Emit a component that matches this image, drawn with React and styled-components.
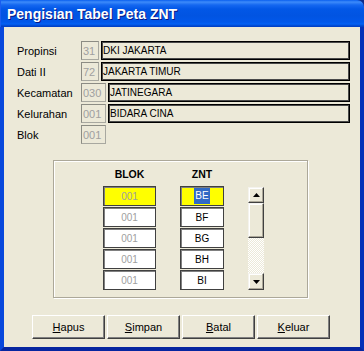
import React from 'react';
import styled, { createGlobalStyle } from 'styled-components';

const Global = createGlobalStyle`
  html, body { margin: 0; padding: 0; background: #0b2a8a; }
  body { font-family: "Liberation Sans", Arial, sans-serif; }
  * { box-sizing: border-box; }
`;

const Window = styled.div`
  width: 364px;
  height: 351px;
  display: flex;
  flex-direction: column;
  border-top-right-radius: 7px;
  overflow: hidden;
`;

const TitleBar = styled.div`
  height: 27px;
  flex: none;
  display: flex;
  align-items: center;
  padding: 1px 0 0 6px;
  background: linear-gradient(180deg, #0a5fef 0px, #3d8bfa 2px, #1467f0 5px, #0257e6 9px, #0154e2 16px, #0157ea 22px, #0361f4 24px, #0045cc 26px, #003dc4 27px);
  border-left: 1px solid #1a5ef0;
  color: #fff;
  font: bold 14px "Liberation Sans", Arial, sans-serif;
  text-shadow: 1px 1px 0 #0a1883;
`;

const Body = styled.div`
  flex: 1;
  display: flex;
  flex-direction: column;
  align-items: flex-start;
  background: #ece9d8;
  border-left: 4px solid #0848dc;
  border-right: 4px solid #0530b8;
  border-bottom: 4px solid #0726a0;
  padding: 14px 10px 8px 13px;
  font-size: 11px;
  color: #000;
`;

const Fields = styled.div`
  display: flex;
  flex-direction: column;
  gap: 2px;
  align-self: stretch;
`;

const Row = styled.div`
  display: flex;
  height: 19px;
  align-items: stretch;
`;

const Label = styled.div`
  width: 64px;
  display: flex;
  align-items: center;
  font-size: 11px;
`;

const CodeBox = styled.div`
  width: ${p => p.$w}px;
  flex: none;
  display: flex;
  align-items: center;
  padding-left: 1px;
  border: 1px solid #a8a8a0;
  border-top-color: #8c8c84;
  border-left-color: #8c8c84;
  color: #a0a0a0;
  font-size: 11px;
  white-space: nowrap;
`;

const NameBox = styled.div`
  flex: 1;
  margin-left: 2px;
  display: flex;
  align-items: center;
  padding-left: 1px;
  border: 1px solid #000;
  box-shadow: inset 1px 1px 0 #4a4a4a, inset -1px -1px 0 #4a4a4a;
  font-size: 10px;
  color: #000;
`;

const Frame = styled.div`
  margin: 16px 0 0 36px;
  width: 255px;
  height: 138px;
  border: 1px solid #aca899;
  box-shadow: inset 1px 1px 0 #fff, 1px 1px 0 #fff;
  display: flex;
  gap: 24px;
  padding-left: 49px;
`;

const Column = styled.div`
  width: ${p => p.$w}px;
  display: flex;
  flex-direction: column;
  gap: 1px;
`;

const Header = styled.div`
  height: 24px;
  display: flex;
  align-items: center;
  justify-content: center;
  font-weight: bold;
  font-size: 10.5px;
  padding-top: 2px;
`;

const Cell = styled.div`
  height: 20px;
  display: flex;
  align-items: center;
  justify-content: center;
  background: ${p => (p.$active ? '#ffff00' : '#fff')};
  color: ${p => (p.$muted ? '#a0a0a0' : '#000')};
  border: 1px solid #404040;
  box-shadow: inset 1px 1px 0 #808080;
  font-size: 10px;
`;

const Selected = styled.span`
  background: #316ac5;
  color: #fff;
  padding: 1px 1px;
  line-height: 14px;
`;

const ScrollBar = styled.div`
  width: 16px;
  height: 103px;
  margin-top: 26px;
  display: flex;
  flex-direction: column;
  background-color: #ece9d8;
  background-image: repeating-conic-gradient(#fff 0 25%, #ece9d8 0 50%);
  background-size: 2px 2px;
`;

const Raised = styled.div`
  height: ${p => p.$h}px;
  flex: none;
  display: flex;
  align-items: center;
  justify-content: center;
  background: #ece9d8;
  border: 1px solid;
  border-color: #f4f3ee #404040 #404040 #f4f3ee;
  box-shadow: inset -1px -1px 0 #aca899, inset 1px 1px 0 #fff;
`;

const Spacer = styled.div`
  flex: 1;
`;

const Buttons = styled.div`
  display: flex;
  gap: 2px;
  margin: 17px 0 0 15px;
`;

const Button = styled.button`
  width: 73px;
  height: 24px;
  background: #ece9d8;
  border: 1px solid;
  border-color: #fff #404040 #404040 #fff;
  box-shadow: inset -1px -1px 0 #808080;
  font: 11px "Liberation Sans", Arial, sans-serif;
  color: #000;
  padding: 0;
  u { text-decoration: underline; }
`;

const Arrow = ({ up }) => (
  <svg width="7" height="4" viewBox="0 0 7 4">
    <polygon points={up ? '3.5,0 7,4 0,4' : '0,0 7,0 3.5,4'} fill="#000" />
  </svg>
);

const fields = [
  { label: 'Propinsi', code: '31', w: 18, name: 'DKI JAKARTA' },
  { label: 'Dati II', code: '72', w: 18, name: 'JAKARTA TIMUR' },
  { label: 'Kecamatan', code: '030', w: 25, name: 'JATINEGARA' },
  { label: 'Kelurahan', code: '001', w: 25, name: 'BIDARA CINA' },
  { label: 'Blok', code: '001', w: 25 },
];

const znt = ['BE', 'BF', 'BG', 'BH', 'BI'];

export default function App() {
  return (
    <>
      <Global />
      <Window>
        <TitleBar>Pengisian Tabel Peta ZNT</TitleBar>
        <Body>
          <Fields>
            {fields.map(f => (
              <Row key={f.label}>
                <Label>{f.label}</Label>
                <CodeBox $w={f.w}>{f.code}</CodeBox>
                {f.name && <NameBox>{f.name}</NameBox>}
              </Row>
            ))}
          </Fields>
          <Frame>
            <Column $w={53}>
              <Header>BLOK</Header>
              {znt.map((z, i) => (
                <Cell key={z} $active={i === 0} $muted>001</Cell>
              ))}
            </Column>
            <Column $w={44}>
              <Header>ZNT</Header>
              {znt.map((z, i) => (
                <Cell key={z} $active={i === 0}>
                  {i === 0 ? <Selected>{z}</Selected> : z}
                </Cell>
              ))}
            </Column>
            <ScrollBar>
              <Raised $h={16}><Arrow up /></Raised>
              <Raised $h={35} />
              <Spacer />
              <Raised $h={17}><Arrow /></Raised>
            </ScrollBar>
          </Frame>
          <Buttons>
            <Button><u>H</u>apus</Button>
            <Button><u>S</u>impan</Button>
            <Button><u>B</u>atal</Button>
            <Button><u>K</u>eluar</Button>
          </Buttons>
        </Body>
      </Window>
    </>
  );
}
